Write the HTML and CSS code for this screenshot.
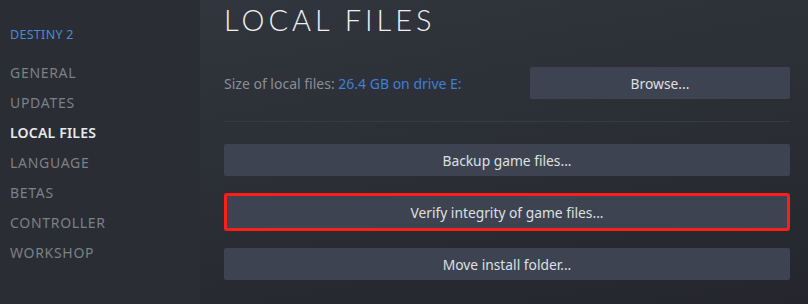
FILE: index.html
```html
<!DOCTYPE html>
<html>
<head>
<meta charset="utf-8">
<link rel="stylesheet" href="styles.css">
</head>
<body>
<div class="app">
  <nav class="sidebar">
    <div class="game">DESTINY 2</div>
    <ul class="menu">
      <li>GENERAL</li>
      <li>UPDATES</li>
      <li class="active">LOCAL FILES</li>
      <li>LANGUAGE</li>
      <li>BETAS</li>
      <li>CONTROLLER</li>
      <li>WORKSHOP</li>
    </ul>
  </nav>
  <main class="content">
    <h1 class="title">LOCAL FILES</h1>
    <div class="info-row">
      <div class="size">Size of local files: <span class="value">26.4 GB on drive E:</span></div>
      <button class="btn browse">Browse...</button>
    </div>
    <div class="sep"></div>
    <div class="actions">
      <button class="btn">Backup game files...</button>
      <button class="btn highlight">Verify integrity of game files...</button>
      <button class="btn">Move install folder...</button>
    </div>
  </main>
</div>
</body>
</html>
```

FILE: styles.css
```css
html, body {
  margin: 0;
  padding: 0;
  width: 808px;
  height: 304px;
  overflow: hidden;
  background: #2a2d34;
  font-family: "Noto Sans", "Liberation Sans", Arial, sans-serif;
}
.app {
  display: flex;
  width: 808px;
  height: 304px;
}
.sidebar {
  width: 200px;
  flex: none;
  background: #2a2d34;
  padding-left: 10px;
  box-sizing: border-box;
}
.game {
  margin-top: 26px;
  line-height: 18px;
  font-size: 12.5px;
  letter-spacing: 0.3px;
  color: #4b8ad6;
}
.menu {
  list-style: none;
  margin: 14px 0 0 0;
  padding: 0;
}
.menu li {
  line-height: 30px;
  font-size: 14px;
  color: #7d8086;
  letter-spacing: 0.7px;
}
.menu li.active {
  color: #e8e9ea;
  font-weight: 600;
  letter-spacing: 0.2px;
}
.content {
  flex: 1;
  padding: 0 18px 0 24px;
  background: linear-gradient(170deg, #31353d 0%, #2a2d34 55%, #24262c 100%);
}
.title {
  margin: 0;
  font-family: Lato, "Open Sans", sans-serif;
  font-weight: 300;
  font-size: 29px;
  line-height: 40px;
  letter-spacing: 4px;
  color: #eef0f2;
  padding-top: 0;
}
.info-row {
  margin-top: 27px;
  height: 32px;
  display: flex;
  align-items: center;
  justify-content: space-between;
}
.size {
  font-size: 14px;
  color: #8a8e94;
}
.value {
  color: #3f7fdc;
}
.btn {
  display: block;
  box-sizing: border-box;
  height: 32px;
  border: none;
  border-radius: 2px;
  background: #3d4350;
  color: #dde0e3;
  font-family: "Noto Sans", "Liberation Sans", Arial, sans-serif;
  font-size: 13.8px;
  padding: 0;
  margin: 0;
  width: 100%;
}
.browse {
  width: 260px;
}
.sep {
  margin-top: 22px;
  height: 1px;
  background: #363a42;
}
.actions {
  margin-top: 22px;
  display: flex;
  flex-direction: column;
  gap: 17px;
}
.highlight {
  height: 38px;
  border: 3px solid #ff1f1a;
  border-radius: 3px;
}
```
